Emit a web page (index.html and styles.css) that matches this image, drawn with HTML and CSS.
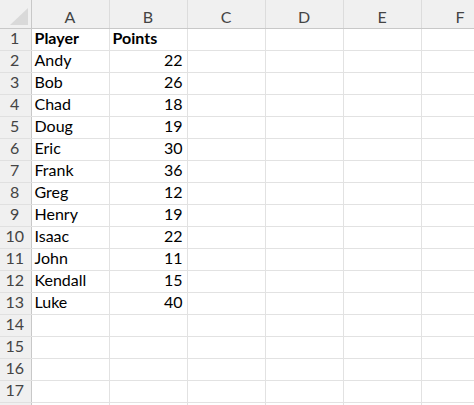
FILE: index.html
```html
<!DOCTYPE html>
<html>
<head>
<meta charset="utf-8">
<link rel="stylesheet" href="styles.css">
</head>
<body>
<table class="sheet">
  <colgroup>
    <col class="c-rh"><col class="c-col"><col class="c-col"><col class="c-col"><col class="c-col"><col class="c-col"><col class="c-col">
  </colgroup>
  <thead>
    <tr class="hdr">
      <th class="corner"><svg class="tri" width="18" height="17" viewBox="0 0 18 17"><polygon points="18,0 18,17 0,17" fill="#d9d9d9"/></svg></th>
      <th>A</th><th>B</th><th>C</th><th>D</th><th>E</th><th>F</th>
    </tr>
  </thead>
  <tbody>
    <tr><th>1</th><td class="b">Player</td><td class="b">Points</td><td></td><td></td><td></td><td></td></tr>
    <tr><th>2</th><td>Andy</td><td class="n">22</td><td></td><td></td><td></td><td></td></tr>
    <tr><th>3</th><td>Bob</td><td class="n">26</td><td></td><td></td><td></td><td></td></tr>
    <tr><th>4</th><td>Chad</td><td class="n">18</td><td></td><td></td><td></td><td></td></tr>
    <tr><th>5</th><td>Doug</td><td class="n">19</td><td></td><td></td><td></td><td></td></tr>
    <tr><th>6</th><td>Eric</td><td class="n">30</td><td></td><td></td><td></td><td></td></tr>
    <tr><th>7</th><td>Frank</td><td class="n">36</td><td></td><td></td><td></td><td></td></tr>
    <tr><th>8</th><td>Greg</td><td class="n">12</td><td></td><td></td><td></td><td></td></tr>
    <tr><th>9</th><td>Henry</td><td class="n">19</td><td></td><td></td><td></td><td></td></tr>
    <tr><th>10</th><td>Isaac</td><td class="n">22</td><td></td><td></td><td></td><td></td></tr>
    <tr><th>11</th><td>John</td><td class="n">11</td><td></td><td></td><td></td><td></td></tr>
    <tr><th>12</th><td>Kendall</td><td class="n">15</td><td></td><td></td><td></td><td></td></tr>
    <tr><th>13</th><td>Luke</td><td class="n">40</td><td></td><td></td><td></td><td></td></tr>
    <tr><th>14</th><td></td><td></td><td></td><td></td><td></td><td></td></tr>
    <tr><th>15</th><td></td><td></td><td></td><td></td><td></td><td></td></tr>
    <tr><th>16</th><td></td><td></td><td></td><td></td><td></td><td></td></tr>
    <tr><th>17</th><td></td><td></td><td></td><td></td><td></td><td></td></tr>
    <tr><th></th><td></td><td></td><td></td><td></td><td></td><td></td></tr>
  </tbody>
</table>
</body>
</html>
```
FILE: styles.css
```css
html, body {
  margin: 0;
  padding: 0;
  background: #ffffff;
  overflow: hidden;
}
body {
  width: 474px;
  height: 405px;
  font-family: Lato, "Open Sans", sans-serif;
}
.sheet {
  border-collapse: collapse;
  table-layout: fixed;
  width: 499px;
  font-size: 16px;
  color: #000;
}
.c-rh { width: 31px; }
.c-col { width: 78px; }

.sheet th, .sheet td {
  padding: 0 4px 3px 3px;
  white-space: nowrap;
  overflow: hidden;
  vertical-align: bottom;
  line-height: 18px;
}
.sheet td {
  border-right: 1px solid #e2e2e2;
  border-bottom: 1px solid #e2e2e2;
}
.sheet tbody tr { height: 21.83px; }

.hdr { height: 28px; }
.hdr th {
  background: #f0f0f0;
  font-weight: normal;
  color: #444;
  text-align: center;
  vertical-align: middle;
  padding: 7px 0 0 0;
  border-right: 1px solid #dcdcdc;
  border-bottom: 1px solid #c8c8c8;
}
.hdr th.corner {
  position: relative;
  border-right: 1px solid #c8c8c8;
}
.tri {
  position: absolute;
  left: 10px;
  top: 8px;
}
tbody th {
  background: #f0f0f0;
  font-weight: normal;
  color: #444;
  text-align: center;
  padding: 0 0 3px 0;
  border-right: 1px solid #c8c8c8;
  border-bottom: 1px solid #e0e0e0;
}
.b { font-weight: bold; }
.n { text-align: right; }
```
